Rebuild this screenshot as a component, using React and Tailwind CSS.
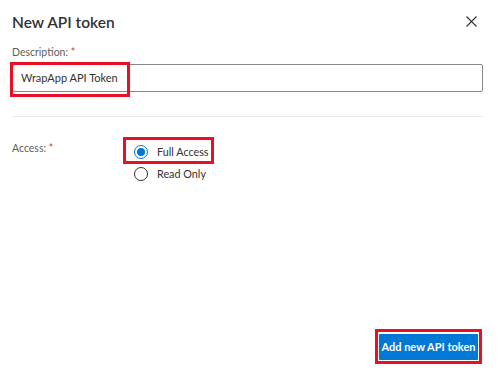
import React, { useState } from 'react';

const App = () => {
    const [access, setAccess] = useState('full');

    return (
        <div className="w-[498px] h-[374px] bg-white flex flex-col text-[#323130]" style={{ fontFamily: 'Lato, "Noto Sans", sans-serif' }}>
            {/* Header */}
            <div className="flex items-start justify-between pl-3 pr-[21px] pt-[15px] h-[44px]">
                <h1 className="text-[15.5px] font-semibold leading-none">New API token</h1>
                <svg width="11" height="11" viewBox="0 0 11 11" className="text-[#323130] mt-[1px]">
                    <path d="M0.5 0.5 L10.5 10.5 M10.5 0.5 L0.5 10.5" stroke="currentColor" strokeWidth="1.1" />
                </svg>
            </div>

            {/* Description */}
            <div className="pl-3 pr-[15px]">
                <label className="block text-[10.5px] leading-4 text-[#605e5c] mb-[4px]">
                    Description: <span className="text-[#d13438]">*</span>
                </label>
                <div className="relative h-[28px] border border-[#8a8886] rounded-[2px] flex items-center pl-2 text-[11px]">
                    <span>WrapApp API Token</span>
                    <div className="absolute left-[-3px] top-[-3px] w-[120px] h-[35px] border-[3px] border-[#e81123]" />
                </div>
            </div>

            <div className="ml-3 mr-[15px] mt-[24px] border-t border-[#edebe9]" />

            {/* Access */}
            <div className="flex pl-3 pt-[22px]">
                <div className="w-[113px] text-[10.5px] text-[#605e5c] leading-4 pt-[1px]">
                    Access: <span className="text-[#d13438]">*</span>
                </div>
                <div className="flex flex-col pt-[2px]">
                    {[
                        { id: 'full', label: 'Full Access' },
                        { id: 'read', label: 'Read Only' },
                    ].map((opt) => (
                        <button
                            key={opt.id}
                            onClick={() => setAccess(opt.id)}
                            className="relative flex items-center gap-[9px] h-[22px] text-[10.8px] pl-[9px]"
                        >
                            <span className={`w-[14px] h-[14px] rounded-full border flex items-center justify-center ${access === opt.id ? 'border-[#0078d4]' : 'border-[#323130]'}`}>
                                {access === opt.id && <span className="w-[8px] h-[8px] rounded-full bg-[#0078d4]" />}
                            </span>
                            <span>{opt.label}</span>
                            {opt.id === 'full' && (
                                <span className="absolute left-[-2px] top-[-4px] w-[91px] h-[27px] border-[3px] border-[#e81123]" />
                            )}
                        </button>
                    ))}
                </div>
            </div>

            {/* Footer */}
            <div className="mt-auto flex justify-end pr-[16px] pb-[10px]">
                <div className="border-[3px] border-[#e81123] p-[1px]">
                    <button className="bg-[#0078d4] text-white text-[11px] font-bold h-[26px] w-[99px] rounded-[1px] whitespace-nowrap">
                        Add new API token
                    </button>
                </div>
            </div>
        </div>
    );
};

export default App;
